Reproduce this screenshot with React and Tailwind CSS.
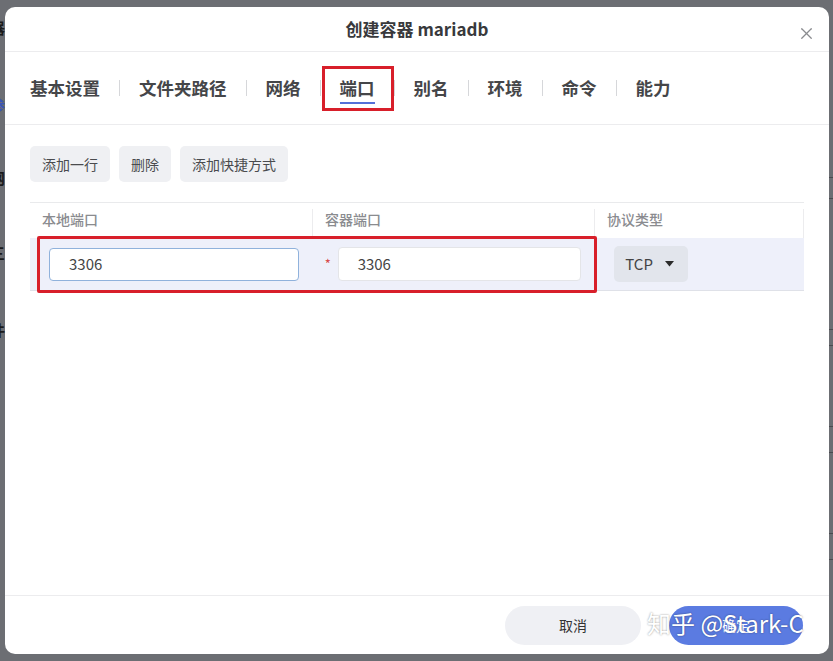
import { X } from 'lucide-react'

const tabs = ['基本设置', '文件夹路径', '网络', '端口', '别名', '环境', '命令', '能力']

function Tabs() {
  return (
    <div className="h-[73px] flex items-center px-[25px] border-b border-[#ececee]">
      {tabs.map((t, i) => (
        <div key={t} className="flex items-center">
          {i > 0 && <div className="w-px h-[16px] bg-[#d6d7da] mx-[19px]" />}
          <div className="relative h-[46px] flex items-center">
            <span className="text-[17.5px] font-bold text-[#454649] leading-none">{t}</span>
            {t === '端口' && (
              <>
                <div className="absolute left-0 right-0 bottom-[7px] h-[2px] bg-[#5470d8]" />
                <div className="absolute -left-[18px] -right-[19px] top-[1px] bottom-0 border-[3px] border-[#d81f2a]" />
              </>
            )}
          </div>
        </div>
      ))}
    </div>
  )
}

function PortTable() {
  return (
    <div className="relative mt-[20px] border-t border-[#e9eaec]">
      <div className="flex h-[35px] text-[14px] font-medium text-[#8a8b8f]">
        <div className="w-[282px] pl-[12px] flex items-center pb-[3px]">本地端口</div>
        <div className="w-[282px] pl-[12px] flex items-center border-l border-[#ececee] mt-[6px] pb-[3px]">
          <span className="-mt-[6px]">容器端口</span>
        </div>
        <div className="w-[210px] pl-[12px] flex items-center border-l border-r border-[#ececee] mt-[6px] pb-[3px]">
          <span className="-mt-[6px]">协议类型</span>
        </div>
      </div>
      <div className="flex h-[53px] bg-[#eef0fa] border-b border-[#dfe1e8] items-center">
        <div className="w-[282px] pl-[19px] pr-[13px]">
          <div className="h-[33px] rounded-[4px] border border-[#90b2dc] bg-white flex items-center pl-[19px] text-[15px] text-[#444]">
            3306
          </div>
        </div>
        <div className="w-[282px] pl-[12px] pr-[12px] flex items-center">
          <span className="text-[#d84a4a] text-[13px] w-[14px] pl-[1px]">*</span>
          <div className="flex-1 h-[34px] rounded-[4px] border border-[#e4e5e8] bg-white flex items-center pl-[19px] text-[15px] text-[#444]">
            3306
          </div>
        </div>
        <div className="w-[211px] pl-[21px]">
          <div className="w-[74px] h-[36px] rounded-[5px] bg-[#e2e5ec] flex items-center pl-[11px] gap-[12px] text-[15px] text-[#444]">
            TCP
            <svg width="9" height="6" viewBox="0 0 9 6"><path d="M0 0h9L4.5 5.5z" fill="#2b2b2b" /></svg>
          </div>
        </div>
      </div>
      <div className="absolute left-[7px] top-[33px] w-[560px] h-[57px] border-[3px] border-[#d81f2a] rounded-[2px] pointer-events-none" />
    </div>
  )
}

export default function App() {
  return (
    <div
      className="relative w-[833px] h-[661px] bg-[#6c6e73] overflow-hidden flex pt-[7px]"
      style={{ fontFamily: '"Noto Sans CJK SC", "Noto Sans", sans-serif' }}
    >
      <div className="w-[5px] relative text-[#1b1b1b] text-[15px] font-bold leading-none">
        <span className="absolute -left-[10px] top-[13px]">器</span>
        <span className="absolute -left-[10px] top-[90px] text-[#3b55b8]">参</span>
        <span className="absolute -left-[10px] top-[163px]">网</span>
        <span className="absolute -left-[10px] top-[238px]">三</span>
        <span className="absolute -left-[10px] top-[315px]">件</span>
      </div>
      <div className="w-[824px] h-[647px] bg-white rounded-[10px] flex flex-col">
        <div className="relative h-[45px] border-b border-[#ececee] flex items-center justify-center">
          <span className="text-[17px] font-bold text-[#38393c]">创建容器 mariadb</span>
          <X className="absolute right-[13px] top-[17px] w-[19px] h-[19px] text-[#8a8b8f]" strokeWidth={1.6} />
        </div>
        <Tabs />
        <div className="px-[25px] pt-[21px] flex-1">
          <div className="flex gap-[9px]">
            {['添加一行', '删除', '添加快捷方式'].map((b) => (
              <div key={b} className="h-[36px] px-[12px] rounded-[5px] bg-[#eff0f3] flex items-center text-[14px] text-[#4a4b4e]">
                {b}
              </div>
            ))}
          </div>
          <PortTable />
        </div>
        <div className="h-[59px] border-t border-[#ececee] flex items-center justify-end gap-[28px] pr-[26px]">
          <div className="w-[136px] h-[39px] rounded-full bg-[#eff0f4] flex items-center justify-center text-[14px] text-[#333]">
            取消
          </div>
          <div className="w-[134px] h-[39px] rounded-full bg-[#5b7be1] flex items-center justify-center text-[14px] text-white">
            确定
          </div>
        </div>
      </div>
      <div className="flex-1 flex flex-col">
        <div className="h-[170px]" />
        <div className="h-px bg-[#4a4b4f]" />
        <div className="h-[20px]" />
        <div className="h-px bg-[#4a4b4f]" />
        <div className="h-[130px]" />
        <div className="h-px bg-[#4a4b4f]" />
        <div className="h-[15px]" />
        <div className="h-px bg-[#4a4b4f]" />
        <div className="h-[80px]" />
        <div className="h-px bg-[#4a4b4f]" />
        <div className="h-[25px]" />
        <div className="h-px bg-[#4a4b4f]" />
        <div className="h-[80px]" />
        <div className="h-px bg-[#4a4b4f]" />
        <div className="h-[25px]" />
        <div className="h-px bg-[#4a4b4f]" />
      </div>
      <div
        className="absolute left-[647px] top-[611px] text-[24px] text-white leading-none whitespace-nowrap"
        style={{ textShadow: '0 0 2px rgba(0,0,0,0.45)' }}
      >
        知乎 @Stark-C
      </div>
    </div>
  )
}
